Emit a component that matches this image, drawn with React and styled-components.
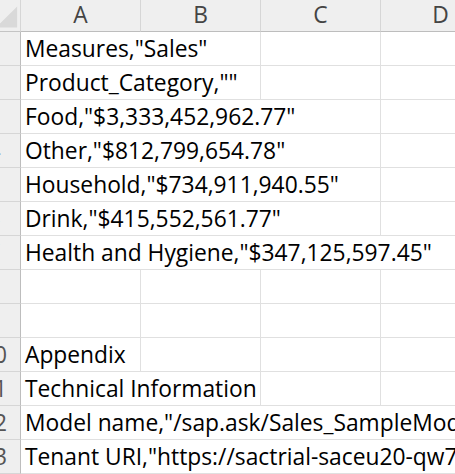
import React from "react";
import styled, { createGlobalStyle } from "styled-components";

const GlobalStyle = createGlobalStyle`
  html, body {
    margin: 0;
    padding: 0;
    background: #ffffff;
    overflow: hidden;
  }
  body {
    font-family: "Open Sans", "Noto Sans", sans-serif;
  }
`;

const Sheet = styled.div`
  display: grid;
  grid-template-columns: 21px repeat(4, 120px);
  grid-template-rows: 32px repeat(13, 34px);
  width: 501px;
  font-size: 22.8px;
`;

const Corner = styled.div`
  background: #efefef;
  border-right: 1px solid #d6d6d6;
  border-bottom: 1px solid #c4c4c4;
  box-sizing: border-box;
  overflow: hidden;
  display: flex;
  align-items: flex-end;
  justify-content: flex-end;
`;

const ColHeader = styled.div`
  background: #efefef;
  border-right: 1px solid #d6d6d6;
  border-bottom: 1px solid #bdbdbd;
  box-sizing: border-box;
  color: #444444;
  display: flex;
  align-items: center;
  justify-content: center;
  line-height: 31px;
  padding-bottom: 2px;
`;

const RowHeader = styled.div`
  background: #efefef;
  border-right: 1px solid #bdbdbd;
  border-bottom: 1px solid #d6d6d6;
  box-sizing: border-box;
  overflow: hidden;
  display: flex;
  justify-content: flex-end;
  color: #555555;
  line-height: 33px;
`;

const RowNumber = styled.span`
  flex: none;
  width: 52px;
  text-align: center;
`;

const Cell = styled.div`
  grid-column: span ${(p) => p.$span};
  border-right: 1px solid #e0e0e0;
  border-bottom: 1px solid #e0e0e0;
  box-sizing: border-box;
  padding-left: 4px;
  white-space: nowrap;
  overflow: hidden;
  line-height: 33px;
  color: #000000;
  font-weight: 500;
`;

const columns = ["A", "B", "C", "D"];

const rows = [
  { text: 'Measures,"Sales"', span: 2 },
  { text: 'Product_Category,""', span: 2 },
  { text: 'Food,"$3,333,452,962.77"', span: 3 },
  { text: 'Other,"$812,799,654.78"', span: 3 },
  { text: 'Household,"$734,911,940.55"', span: 3 },
  { text: 'Drink,"$415,552,561.77"', span: 3 },
  { text: 'Health and Hygiene,"$347,125,597.45"', span: 4 },
  { text: "", span: 1 },
  { text: "", span: 1 },
  { text: "Appendix", span: 1 },
  { text: "Technical Information", span: 2 },
  { text: 'Model name,"/sap.ask/Sales_SampleModel"', span: 4 },
  { text: 'Tenant URI,"https://sactrial-saceu20-qw7"', span: 4 },
];

function SelectAll() {
  return (
    <svg width="21" height="31" viewBox="0 0 21 31">
      <polygon points="18,6 18,28 -4,28" fill="#d9d9d9" />
    </svg>
  );
}

export default function App() {
  return (
    <>
      <GlobalStyle />
      <Sheet>
        <Corner>
          <SelectAll />
        </Corner>
        {columns.map((c) => (
          <ColHeader key={c}>{c}</ColHeader>
        ))}
        {rows.map((r, i) => {
          const cells = [<Cell key="a" $span={r.span}>{r.text}</Cell>];
          for (let k = r.span; k < 4; k++) {
            cells.push(<Cell key={k} $span={1} />);
          }
          return (
            <React.Fragment key={i}>
              <RowHeader>
                <RowNumber>{i + 1}</RowNumber>
              </RowHeader>
              {cells}
            </React.Fragment>
          );
        })}
      </Sheet>
    </>
  );
}
